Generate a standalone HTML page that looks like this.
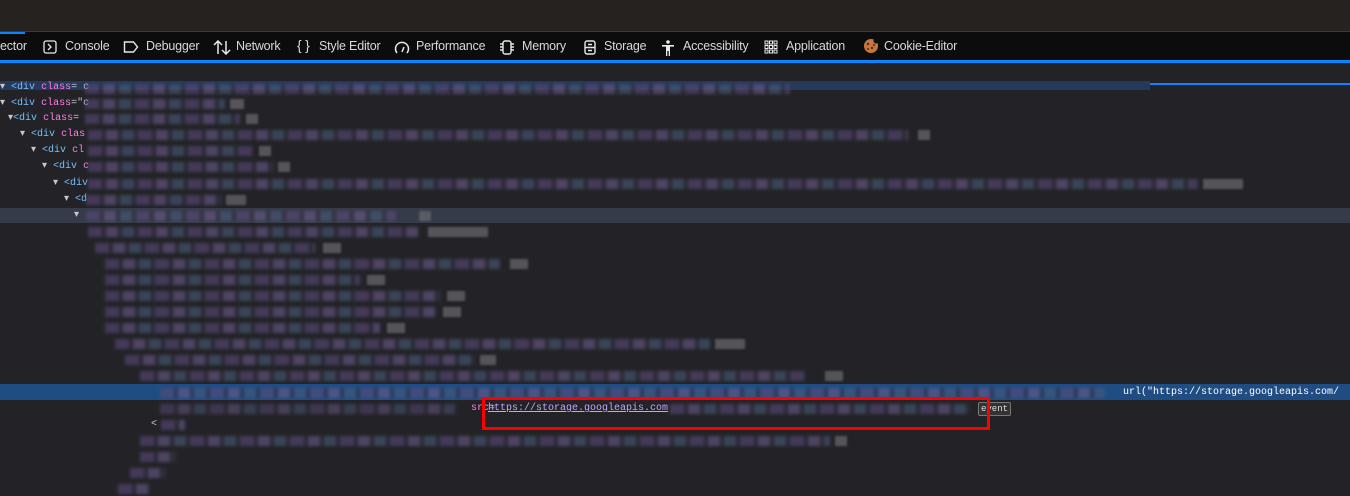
<!DOCTYPE html>
<html><head><meta charset="utf-8"><style>
body{margin:0;width:1350px;height:493px;overflow:hidden;background:#232327;font-family:"Liberation Sans",sans-serif;position:relative}
.top{position:absolute;left:0;top:0;width:1350px;height:31px;background:#262220;border-bottom:1px solid #3a3a3e}
.tb{position:absolute;left:0;top:32px;width:1350px;height:28px;background:#0c0c0d;color:#d8d8da;font-size:12.5px}
.tb span{position:absolute;top:7px;white-space:nowrap;letter-spacing:-0.2px}
.ic{position:absolute;top:8px}
.bl{position:absolute;height:3px;background:#0a84ff}
.row{position:absolute;height:15px;font-family:"Liberation Mono",monospace;font-size:10px;line-height:15px;color:#c8c8cc;white-space:nowrap}
.b{position:absolute;height:10px;top:3px;filter:blur(1.6px);opacity:.6;background:repeating-linear-gradient(90deg,#5a4a7a 0 14px,#2e2e3a 14px 18px,#6b5a8a 18px 30px,#2e2e3a 30px 34px,#4a5a7a 34px 46px,#2e2e3a 46px 50px)}
.g{position:absolute;height:10px;top:3px;width:12px;background:#6a6a70;filter:blur(1px);opacity:.7}
.tag{color:#75bfff}.at{color:#ff7de9}
</style></head><body>
<div class="top"></div>
<div class="tb">
<span style="left:0">ector</span>
<svg class="ic" style="left:43px" width="14" height="14" viewBox="0 0 14 14" fill="none" stroke="#e8e8ea" stroke-width="1.3"><rect x="1" y="1" width="12" height="12" rx="2"/><path d="M5 4l3 3-3 3"/></svg><span style="left:65px">Console</span>
<svg class="ic" style="left:123px" width="16" height="14" viewBox="0 0 16 14" fill="none" stroke="#e8e8ea" stroke-width="1.4"><path d="M1.5 2h9l4 5-4 5h-9z"/></svg><span style="left:146px">Debugger</span>
<svg class="ic" style="left:213px" width="18" height="15" viewBox="0 0 18 15" fill="none" stroke="#e8e8ea" stroke-width="1.5"><path d="M5 14V1M1 5l4-4 4 4M13 1v13M9 10l4 4 4-4"/></svg><span style="left:236px">Network</span>
<span style="left:297px;top:5px;font-size:14px">{ }</span><span style="left:319px">Style Editor</span>
<svg class="ic" style="left:394px" width="16" height="15" viewBox="0 0 16 15" fill="none" stroke="#e8e8ea" stroke-width="1.5"><path d="M3 13A6.5 6.5 0 1 1 13 13"/><path d="M8 12l2-5"/></svg><span style="left:416px">Performance</span>
<svg class="ic" style="left:499px" width="16" height="15" viewBox="0 0 16 15" fill="none" stroke="#e8e8ea" stroke-width="1.4"><rect x="4" y="1" width="8" height="13" rx="2"/><path d="M1 4h3M1 7h3M1 10h3M12 4h3M12 7h3M12 10h3"/></svg><span style="left:522px">Memory</span>
<svg class="ic" style="left:584px" width="12" height="15" viewBox="0 0 12 15" fill="none" stroke="#e8e8ea" stroke-width="1.4"><rect x="1" y="1" width="10" height="13" rx="2"/><path d="M1 7.5h10M4 4.5h4M4 10.5h4"/></svg><span style="left:604px">Storage</span>
<svg class="ic" style="left:661px" width="14" height="16" viewBox="0 0 14 16" fill="#e8e8ea"><circle cx="7" cy="2" r="1.8"/><path d="M1 5h12v1.6H9V16H7.7v-5H6.3v5H5V6.6H1z"/></svg><span style="left:683px">Accessibility</span>
<svg class="ic" style="left:764px" width="14" height="14" viewBox="0 0 14 14" fill="none" stroke="#e8e8ea" stroke-width="1"><rect x="1" y="1" width="3" height="3"/><rect x="5.5" y="1" width="3" height="3"/><rect x="10" y="1" width="3" height="3"/><rect x="1" y="5.5" width="3" height="3"/><rect x="5.5" y="5.5" width="3" height="3"/><rect x="10" y="5.5" width="3" height="3"/><rect x="1" y="10" width="3" height="3"/><rect x="5.5" y="10" width="3" height="3"/><rect x="10" y="10" width="3" height="3"/></svg><span style="left:786px">Application</span>
<svg class="ic" style="left:863px;top:6px" width="16" height="16" viewBox="0 0 16 16"><circle cx="8" cy="8" r="7" fill="#c8763c"/><circle cx="13" cy="3" r="2.5" fill="#0c0c0d"/><circle cx="5" cy="6" r="1.2" fill="#4a2a14"/><circle cx="9" cy="10" r="1.2" fill="#4a2a14"/><circle cx="5" cy="11" r="1" fill="#4a2a14"/><circle cx="11" cy="7" r="1" fill="#4a2a14"/></svg><span style="left:884px">Cookie-Editor</span>
</div>
<div class="bl" style="left:0;top:32px;width:25px;height:2px"></div>
<div class="bl" style="left:0;top:60px;width:1350px"></div>
<div style="position:absolute;left:0;top:81px;width:1150px;height:9px;background:#25395a"></div>
<div class="bl" style="left:1150px;top:83px;width:200px;height:2px"></div>
<div style="position:absolute;left:0;top:208px;width:1350px;height:15px;background:#353b48"></div>
<div style="position:absolute;left:0;top:384px;width:1350px;height:16px;background:#1f4d83"></div>

<div class="row" style="left:0;top:80px">▾ <span class="tag">&lt;div</span> <span class="at">class</span>= c<span class="b" style="left:85px;width:705px;top:4px"></span></div>
<div class="row" style="left:0;top:96px">▾ <span class="tag">&lt;div</span> <span class="at">class</span>="c<span class="b" style="left:85px;width:140px"></span><span class="g" style="left:230px;width:14px"></span></div>
<div class="row" style="left:8px;top:111px">▾<span class="tag">&lt;div</span> <span class="at">class</span>=<span class="b" style="left:77px;width:155px"></span><span class="g" style="left:238px"></span></div>
<div class="row" style="left:20px;top:127px">▾ <span class="tag">&lt;div</span> <span class="at">clas</span><span class="b" style="left:68px;width:820px"></span><span class="g" style="left:898px"></span></div>
<div class="row" style="left:31px;top:143px">▾ <span class="tag">&lt;div</span> <span class="at">cl</span><span class="b" style="left:57px;width:165px"></span><span class="g" style="left:228px"></span></div>
<div class="row" style="left:42px;top:159px">▾ <span class="tag">&lt;div</span> <span class="at">c</span><span class="b" style="left:46px;width:185px"></span><span class="g" style="left:236px"></span></div>
<div class="row" style="left:53px;top:176px">▾ <span class="tag">&lt;div</span><span class="b" style="left:35px;width:1110px"></span><span class="g" style="left:1150px;width:40px"></span></div>
<div class="row" style="left:64px;top:192px">▾ <span class="tag">&lt;d</span><span class="b" style="left:22px;width:135px"></span><span class="g" style="left:162px;width:20px"></span></div>
<div class="row" style="left:74px;top:208px">▾<span class="b" style="left:12px;width:310px"></span><span class="g" style="left:345px"></span></div>
<div class="row" style="left:88px;top:224px"><span class="b" style="left:0;width:330px"></span><span class="g" style="left:340px;width:60px"></span></div>
<div class="row" style="left:95px;top:240px"><span class="b" style="left:0;width:220px"></span><span class="g" style="left:228px;width:18px"></span></div>
<div class="row" style="left:105px;top:256px"><span class="b" style="left:0;width:395px"></span><span class="g" style="left:405px;width:18px"></span></div>
<div class="row" style="left:105px;top:272px"><span class="b" style="left:0;width:255px"></span><span class="g" style="left:262px;width:18px"></span></div>
<div class="row" style="left:105px;top:288px"><span class="b" style="left:0;width:335px"></span><span class="g" style="left:342px;width:18px"></span></div>
<div class="row" style="left:105px;top:304px"><span class="b" style="left:0;width:330px"></span><span class="g" style="left:338px;width:18px"></span></div>
<div class="row" style="left:105px;top:320px"><span class="b" style="left:0;width:275px"></span><span class="g" style="left:282px;width:18px"></span></div>
<div class="row" style="left:115px;top:336px"><span class="b" style="left:0;width:595px"></span><span class="g" style="left:600px;width:30px"></span></div>
<div class="row" style="left:125px;top:352px"><span class="b" style="left:0;width:350px"></span><span class="g" style="left:355px;width:16px"></span></div>
<div class="row" style="left:140px;top:368px"><span class="b" style="left:0;width:665px"></span><span class="g" style="left:685px;width:18px"></span></div>
<div class="row" style="left:160px;top:385px;color:#fff"><span class="b" style="left:0;width:945px"></span><span style="position:absolute;left:963px">url("https://storage.googleapis.com/</span></div>
<div class="row" style="left:160px;top:401px"><span class="b" style="left:0;width:295px;opacity:.5"></span><span class="at" style="position:absolute;left:311px">src=</span><span style="position:absolute;left:328px;color:#c3a5ff;text-decoration:underline">https://storage.googleapis.com</span><span class="b" style="left:510px;width:300px"></span><span style="position:absolute;left:818px;top:1px;height:12px;line-height:12px;font-size:9px;border:1px solid #777;border-radius:2px;padding:0 2px;color:#ddd;background:#333">event</span></div>
<div style="position:absolute;left:482px;top:397px;width:502px;height:27px;border:3px solid #f00"></div>
<div class="row" style="left:151px;top:417px">&lt;<span class="b" style="left:10px;width:24px"></span></div>
<div class="row" style="left:140px;top:433px"><span class="b" style="left:0;width:690px"></span><span class="g" style="left:695px"></span></div>
<div class="row" style="left:140px;top:449px"><span class="b" style="left:0;width:35px"></span></div>
<div class="row" style="left:130px;top:465px"><span class="b" style="left:0;width:35px"></span></div>
<div class="row" style="left:118px;top:481px"><span class="b" style="left:0;width:32px"></span></div>
</body></html>
